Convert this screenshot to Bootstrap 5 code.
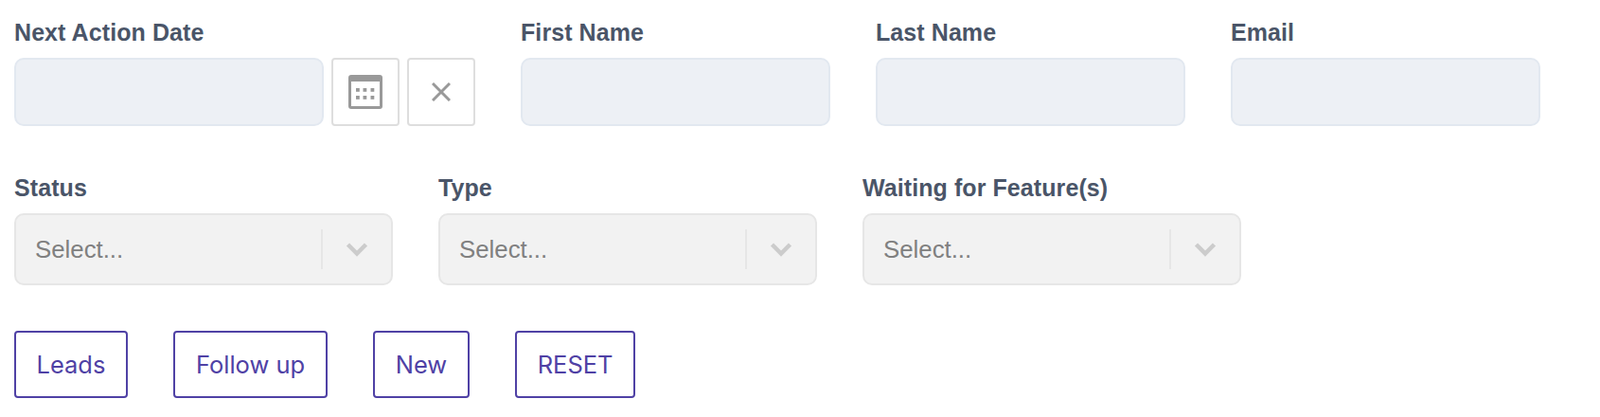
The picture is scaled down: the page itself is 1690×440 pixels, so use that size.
<!DOCTYPE html>
<html lang="en">
<head>
<meta charset="utf-8">
<title>Filters</title>
<link href="https://cdn.jsdelivr.net/npm/bootstrap@5.3.0/dist/css/bootstrap.min.css" rel="stylesheet">
<style>
body { background: #fff; font-family: "Liberation Sans", Arial, sans-serif; }
.filter-page { padding: 21px 0 0 15px; }
.field-label { display: block; margin: 0 0 13px; font-size: 25px; line-height: 27px; font-weight: 700; letter-spacing: .08px; color: #4a5568; }
.row-one { gap: 48px; margin-bottom: 52px; }
.date-field { width: 488px; margin-right: -1px; }
.text-field { width: 327px; }
.plain-input, .plain-input:focus { height: 72px; background: #edf0f5; border: 2px solid #e2e8f0; border-radius: 10px; box-shadow: none; }
.date-input { width: 327px; flex: none; }
.icon-box { width: 72px; height: 72px; padding: 0; background: #fff; border: 2px solid #dedede; border-radius: 4px; }
.date-gap { gap: 8px; }
.row-two { gap: 48px; margin-bottom: 48px; }
.select-field { width: 400px; }
.fake-select { height: 76px; background: #f2f2f2; border: 2px solid #e6e6e6; border-radius: 10px; color: #808080; font-size: 25.8px; padding-left: 20px; }
.fake-value { flex: 1 1 auto; }
.fake-sep { width: 2px; height: 42px; background: #e6e6e6; }
.fake-arrow { width: 72px; }
.row-three { gap: 48.5px; }
.outline-action, .outline-action:hover { height: 71px; padding: 2px 21.5px 0; font-family: Inter, "Liberation Sans", sans-serif; font-size: 25.5px; color: #4f41a5; background: #fff; border: 2px solid #4f41a5; border-radius: 4px; }
</style>
</head>
<body>
<div class="filter-page">
  <div class="d-flex row-one">
    <div class="date-field">
      <label class="field-label">Next Action Date</label>
      <div class="d-flex date-gap">
        <input class="form-control plain-input date-input" type="text" aria-label="Next Action Date">
        <button class="btn icon-box d-flex align-items-center justify-content-center" type="button" aria-label="Open calendar">
          <svg width="36" height="36" viewBox="0 0 36 36"><path fill="#999" d="M3 0h30a3 3 0 0 1 3 3v30a3 3 0 0 1-3 3H3a3 3 0 0 1-3-3V3a3 3 0 0 1 3-3z"/><rect x="3" y="7" width="30" height="26" fill="#fff"/><g fill="#999"><rect x="8" y="14" width="3.800" height="3.800"/><rect x="15.500" y="14" width="3.800" height="3.800"/><rect x="23.500" y="14" width="3.800" height="3.800"/><rect x="8" y="22" width="3.800" height="3.800"/><rect x="15.500" y="22" width="3.800" height="3.800"/><rect x="23.500" y="22" width="3.800" height="3.800"/></g></svg>
        </button>
        <button class="btn icon-box d-flex align-items-center justify-content-center" type="button" aria-label="Clear date">
          <svg width="20" height="20" viewBox="0 0 20 20"><path d="M1 1l18 18M19 1L1 19" stroke="#999" stroke-width="3" fill="none"/></svg>
        </button>
      </div>
    </div>
    <div class="text-field">
      <label class="field-label">First Name</label>
      <input class="form-control plain-input" type="text" aria-label="First Name">
    </div>
    <div class="text-field">
      <label class="field-label">Last Name</label>
      <input class="form-control plain-input" type="text" aria-label="Last Name">
    </div>
    <div class="text-field">
      <label class="field-label">Email</label>
      <input class="form-control plain-input" type="text" aria-label="Email">
    </div>
  </div>
  <div class="d-flex row-two">
    <div class="select-field">
      <label class="field-label">Status</label>
      <div class="fake-select d-flex align-items-center">
        <span class="fake-value">Select...</span><span class="fake-sep"></span>
        <span class="fake-arrow d-flex justify-content-center"><svg width="24" height="16" viewBox="0 0 24 16"><path d="M2.5 3L12 12.5 21.500 3" stroke="#ccc" stroke-width="4.500" fill="none"/></svg></span>
      </div>
    </div>
    <div class="select-field">
      <label class="field-label">Type</label>
      <div class="fake-select d-flex align-items-center">
        <span class="fake-value">Select...</span><span class="fake-sep"></span>
        <span class="fake-arrow d-flex justify-content-center"><svg width="24" height="16" viewBox="0 0 24 16"><path d="M2.5 3L12 12.5 21.500 3" stroke="#ccc" stroke-width="4.500" fill="none"/></svg></span>
      </div>
    </div>
    <div class="select-field">
      <label class="field-label">Waiting for Feature(s)</label>
      <div class="fake-select d-flex align-items-center">
        <span class="fake-value">Select...</span><span class="fake-sep"></span>
        <span class="fake-arrow d-flex justify-content-center"><svg width="24" height="16" viewBox="0 0 24 16"><path d="M2.5 3L12 12.5 21.500 3" stroke="#ccc" stroke-width="4.500" fill="none"/></svg></span>
      </div>
    </div>
  </div>
  <div class="d-flex row-three">
    <button class="btn outline-action" type="button">Leads</button>
    <button class="btn outline-action" type="button">Follow up</button>
    <button class="btn outline-action" type="button">New</button>
    <button class="btn outline-action" type="button">RESET</button>
  </div>
</div>
<script src="https://cdn.jsdelivr.net/npm/bootstrap@5.3.0/dist/js/bootstrap.bundle.min.js"></script>
</body>
</html>
